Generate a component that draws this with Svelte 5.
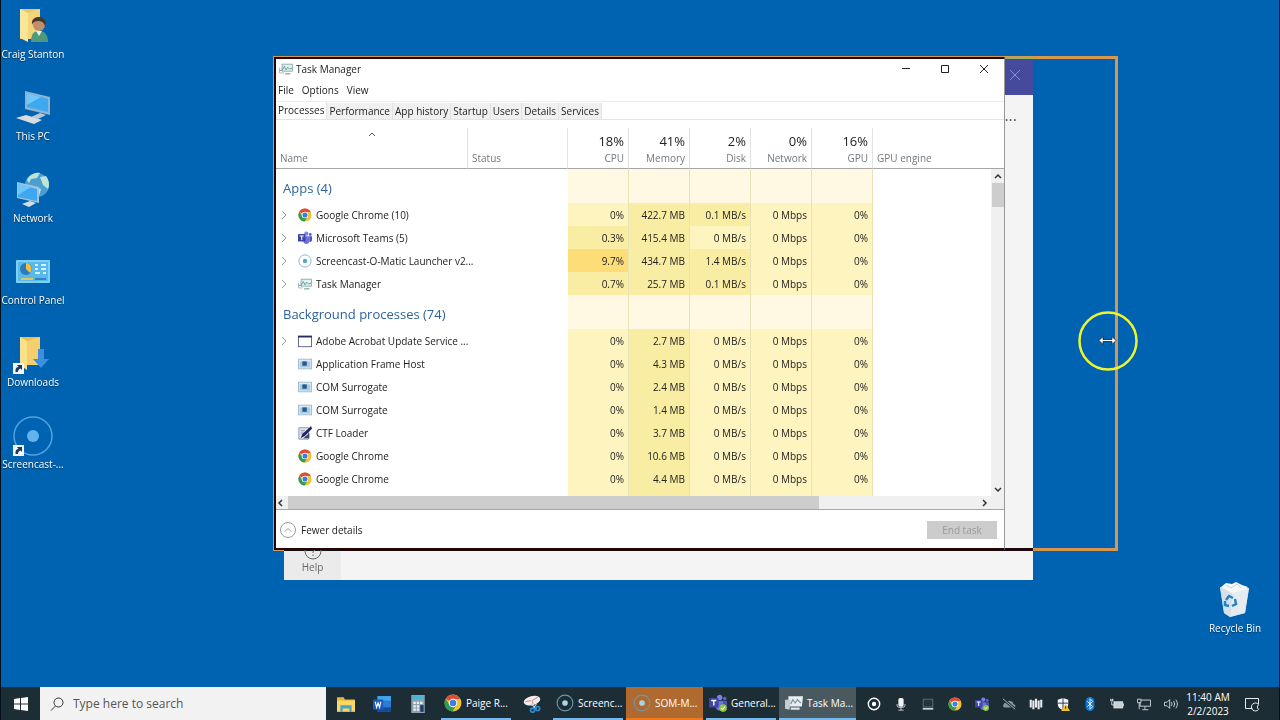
<script lang="ts">
  type Row = { name: string; icon: string; expand?: boolean; values: string[]; heat: number[] };

  const menus = ['File', 'Options', 'View'];
  const tabs = ['Processes', 'Performance', 'App history', 'Startup', 'Users', 'Details', 'Services'];
  const meters = [
    { total: '18%', label: 'CPU' },
    { total: '41%', label: 'Memory' },
    { total: '2%', label: 'Disk' },
    { total: '0%', label: 'Network' },
    { total: '16%', label: 'GPU' },
  ];

  const idle = (name: string, icon: string, memory: string, expand = false): Row => ({
    name,
    icon,
    expand,
    values: ['0%', memory, '0 MB/s', '0 Mbps', '0%'],
    heat: [1, 2, 1, 1, 1],
  });

  const groups: { title: string; rows: Row[] }[] = [
    {
      title: 'Apps (4)',
      rows: [
        { name: 'Google Chrome (10)', icon: 'chrome', expand: true, values: ['0%', '422.7 MB', '0.1 MB/s', '0 Mbps', '0%'], heat: [1, 2, 2, 1, 1] },
        { name: 'Microsoft Teams (5)', icon: 'teams', expand: true, values: ['0.3%', '415.4 MB', '0 MB/s', '0 Mbps', '0%'], heat: [2, 2, 1, 1, 1] },
        { name: 'Screencast-O-Matic Launcher v2...', icon: 'som', expand: true, values: ['9.7%', '434.7 MB', '1.4 MB/s', '0 Mbps', '0%'], heat: [3, 2, 2, 1, 1] },
        { name: 'Task Manager', icon: 'taskmgr', expand: true, values: ['0.7%', '25.7 MB', '0.1 MB/s', '0 Mbps', '0%'], heat: [2, 2, 2, 1, 1] },
      ],
    },
    {
      title: 'Background processes (74)',
      rows: [
        idle('Adobe Acrobat Update Service ...', 'window', '2.7 MB', true),
        idle('Application Frame Host', 'host', '4.3 MB'),
        idle('COM Surrogate', 'host', '2.4 MB'),
        idle('COM Surrogate', 'host', '1.4 MB'),
        idle('CTF Loader', 'ctf', '3.7 MB'),
        idle('Google Chrome', 'chrome', '10.6 MB'),
        idle('Google Chrome', 'chrome', '4.4 MB'),
      ],
    },
  ];

  const shortcuts = [
    { label: 'Craig Stanton', icon: 'user' },
    { label: 'This PC', icon: 'pc' },
    { label: 'Network', icon: 'network' },
    { label: 'Control Panel', icon: 'control' },
    { label: 'Downloads', icon: 'downloads' },
    { label: 'Screencast-...', icon: 'screencast' },
  ];

  const pinned = [
    { label: 'File Explorer', icon: 'explorer' },
    { label: 'Word', icon: 'word' },
    { label: 'Calculator', icon: 'calc' },
  ];

  const tray = ['record', 'mic', 'drive', 'chrome', 'teamsok', 'cloud', 'bars', 'shield', 'bluetooth', 'battery', 'ethernet', 'volume'];
</script>

{#snippet arrowBadge()}
  <rect x="0" y="29" width="11" height="11" fill="#f4f6f8" />
  <path d="M2.500 38q-.5-5 3-5l-1.500-2h5v5l-1.500-1.500q-2.500.5-2.500 3.500z" fill="#23395c" />
{/snippet}

{#snippet bigIcon(name: string)}
  <svg class="big" viewBox="0 0 40 40" aria-hidden="true">
    {#if name === 'user'}
      <path d="M7 3h20v30H7z" fill="#e9c766" />
      <path d="M7 3l8 4v29l-8-4z" fill="#fbe596" />
      <path d="M15 7l12-4v30H15z" fill="#f3d577" />
      <path d="M18 36c0-8 3-11 8-11s9 3 9 11z" fill="#4d9a7c" />
      <path d="M23 25l3 5 3-5z" fill="#e8efe8" />
      <circle cx="26" cy="19" r="6" fill="#c08f6a" />
      <path d="M19 19c-1-7 4-8 7-8s8 2 6 9c-1-4-4-5-7-5-3 0-5 1-6 4z" fill="#4a3528" />
    {:else if name === 'pc'}
      <path d="M12 3l25 6v18l-25-6z" fill="#8fb4cf" />
      <path d="M14 5l21 6v13l-21-5z" fill="#3fa9f0" />
      <path d="M14 5l14 4-14 8z" fill="#71c6fb" />
      <path d="M18 29l9-4 6 2-8 4z" fill="#b9c8d4" />
      <path d="M3 30l10-3 16 5-8 4z" fill="#d9dde2" />
    {:else if name === 'network'}
      <circle cx="24" cy="15" r="12" fill="#4a9fcf" />
      <path d="M14 10c3-6 9-8 13-7l-3 5-6 1-2 4zM27 7l6-1c3 4 4 9 2 13l-5-4zM22 17l6 2-2 7-4-3z" fill="#bfe3d6" />
      <path d="M4 12l22 5v16L4 28z" fill="#9fc4dc" />
      <path d="M5 14l19 5v12L5 27z" fill="#3ea7ee" />
      <path d="M5 14l13 3-13 8z" fill="#6fc5f9" />
      <path d="M9 34l8-3 6 2-7 4z" fill="#d7dde3" />
    {:else if name === 'control'}
      <rect x="3" y="8" width="34" height="23" rx="1" fill="#7fd0f5" />
      <rect x="5" y="10" width="30" height="19" fill="#59b9ea" />
      <circle cx="13" cy="17" r="6" fill="#2b7cbd" />
      <path d="M13 17V11a6 6 0 0 1 4 10z" fill="#f0c24c" />
      <path d="M22 13h3m3 0h5M22 17h3m3 0h5M22 21h5m3 0h3" stroke="#d8f1fc" stroke-width="2" />
      <path d="M8 27h12" stroke="#e2c65c" stroke-width="2" />
      <path d="M22 27h11" stroke="#2d86c3" stroke-width="2" />
    {:else if name === 'downloads'}
      <path d="M7 3h20v28H7z" fill="#e8bf56" />
      <path d="M7 3l7 4v29l-7-5z" fill="#fbe08a" />
      <path d="M14 7l13-4v28H14z" fill="#f4cf6c" />
      <path d="M25 15h6v10h5l-8 9-8-9h5z" fill="#3b8ee0" />
      {@render arrowBadge()}
    {:else if name === 'screencast'}
      <circle cx="20" cy="20" r="19" fill="none" stroke="#4fa3e3" stroke-width="1.500" />
      <circle cx="20" cy="20" r="6" fill="#63b3ee" />
      {@render arrowBadge()}
    {:else if name === 'bin'}
      <path d="M5 7l29 1-4 25-15 4-6-4z" fill="#b9cfe0" />
      <path d="M5 7l12 4-2 26-6-4z" fill="#d4e0ea" />
      <path d="M17 11l17-3-4 25-15 4z" fill="#e6ebf0" />
      <path d="M6 7l5-4 6 1 4-2 6 3 6 2-3 3-13 3z" fill="#f6f7f8" />
      <path d="M11 5l5 3 6-4 4 4" fill="none" stroke="#c9d3dc" />
      <path d="M11 20l3-4 4 2M20 19l1 5-4 2M14 26l-4-1v-4" fill="none" stroke="#2382cb" stroke-width="2.500" />
    {/if}
  </svg>
{/snippet}

{#snippet icon(name: string)}
  <svg class="icon" viewBox="0 0 16 16" aria-hidden="true">
    {#if name === 'chrome'}
      <circle cx="8" cy="8" r="7.500" fill="#f2c230" />
      <path d="M8 8L1.500 4.200A7.500 7.500 0 0 1 14.500 4.500H8z" fill="#df4b3c" />
      <path d="M1.500 4.200A7.500 7.500 0 0 0 7.500 15.500L11 9.700 8 8 4.800 9.500z" fill="#2f9c55" />
      <circle cx="8" cy="8" r="3.800" fill="#fff" />
      <circle cx="8" cy="8" r="2.900" fill="#3f7de0" />
    {:else if name === 'teams' || name === 'teamsok'}
      <circle cx="9.500" cy="3" r="2.400" fill="#7b83eb" />
      <circle cx="14" cy="4" r="1.600" fill="#5b63c4" />
      <path d="M6 6h7v5c0 5-7 5-7 0z" fill="#6a71d8" />
      <path d="M13 6h3v4c0 3-3 3-3 2z" fill="#4b53bc" />
      <rect x="0" y="3.500" width="8.500" height="8.500" rx="1" fill="#4046a8" />
      <path d="M2 5.800h4.500M4.250 5.800v4.500" stroke="#fff" stroke-width="1.200" />
      {#if name === 'teamsok'}
        <circle cx="12.500" cy="12.500" r="3.400" fill="#8dc63f" />
        <path d="M10.800 12.500l1.300 1.300 2.200-2.500" fill="none" stroke="#fff" />
      {/if}
    {:else if name === 'som'}
      <circle cx="8" cy="8" r="7" fill="none" stroke="#7fb2c6" />
      <circle cx="8" cy="8" r="2.500" fill="#5aa5c4" />
    {:else if name === 'somtask'}
      <circle cx="8" cy="8" r="7" fill="none" stroke="#6b98a8" />
      <circle cx="8" cy="8" r="2.500" fill="#a8d4e6" />
    {:else if name === 'taskmgr'}
      <path d="M3.500 2.500h12v8h-12z" fill="#e3f0f2" stroke="#8aa3a9" />
      <path d="M.5 6.500v6h5" fill="none" stroke="#9db2b7" />
      <path d="M1 10l3-1 2-4 2 4 2-3 2 2 3-1" fill="none" stroke="#4c9b94" />
      <path d="M7 13.500h6" stroke="#8fa5ab" stroke-width="1.500" />
    {:else if name === 'taskmgrlight'}
      <path d="M3 2h13l-1 9H3z" fill="#e9eff1" />
      <path d="M0 5h5l-1 9-4-1z" fill="#c3ced2" />
      <path d="M5 9l2-4 2 3 2-3 3 3" fill="none" stroke="#7f9198" />
      <path d="M5 13h8" stroke="#dfe6e9" stroke-width="2" />
    {:else if name === 'window'}
      <rect x=".5" y="2.500" width="15" height="12" fill="#fff" stroke="#54597f" />
      <path d="M0 3h16" stroke="#262c68" stroke-width="2" />
    {:else if name === 'host'}
      <rect x=".5" y="2.500" width="15" height="11" fill="#dcebf5" stroke="#9eb7c9" />
      <rect x="2" y="5" width="12" height="7" fill="#a9cbe2" />
      <rect x="5" y="5" width="5" height="5" fill="#1f5a90" />
    {:else if name === 'ctf'}
      <path d="M1 2h11v13H1z" fill="#e7eaf2" stroke="#7d88a5" />
      <path d="M3 5h5M3 7h4M3 9h3" stroke="#8792b0" />
      <path d="M15 0l1 3-8 8-5 3 2-5z" fill="#1e2560" />
      <path d="M6 14h7V8z" fill="#39437f" />
    {:else if name === 'explorer'}
      <path d="M0 2h6l1 2h9v11H0z" fill="#e8b83d" />
      <path d="M0 5h16v9H0z" fill="#fbd964" />
      <path d="M3 9h10v6h-2v-3H5v3H3z" fill="#4aa3c7" />
    {:else if name === 'word'}
      <path d="M4 1h12v14H4z" fill="#2b7cd3" />
      <path d="M4 1h12v4H4z" fill="#41a5ee" />
      <path d="M4 11h12v4H4z" fill="#134a9e" />
      <path d="M0 4h9v9H0z" fill="#185abd" />
      <path d="M2 6l1.200 5 1.300-4 1.300 4L7 6" fill="none" stroke="#fff" />
    {:else if name === 'calc'}
      <path d="M2 0h12v16H2z" fill="#8da2ae" />
      <path d="M3 1h10v3H3z" fill="#47b5d8" />
      <path d="M4 6h2v2H4zM7 6h2v2H7zM10 6h2v2h-2zM4 9h2v2H4zM7 9h2v2H7zM4 12h2v2H4zM7 12h2v2H7z" fill="#eef3f5" />
      <path d="M10 9h3v6h-3z" fill="#213a6c" />
    {:else if name === 'snip'}
      <ellipse cx="8" cy="5" rx="7.500" ry="4" transform="rotate(-15 8 5)" fill="#f3ecec" />
      <path d="M2 6l5-1M8 5l5-3M8 5l1 3" stroke="#d7968f" />
      <path d="M7 8l5 4M12 8l-3 4" stroke="#c8d3da" />
      <circle cx="8.500" cy="13.500" r="1.800" fill="none" stroke="#2b8ad0" stroke-width="1.500" />
      <circle cx="13" cy="12" r="1.800" fill="none" stroke="#2b8ad0" stroke-width="1.500" />
    {:else if name === 'record'}
      <circle cx="8" cy="8" r="6.500" fill="none" stroke="#fff" stroke-width="1.600" />
      <circle cx="8" cy="8" r="2.500" fill="#fff" />
    {:else if name === 'mic'}
      <rect x="5" y="1" width="6" height="10" rx="2" fill="#f2f4f5" />
      <path d="M3.500 8v2q0 2 4.500 2t4.500-2V8M8 12v3M5 15h6" fill="none" stroke="#d5dadd" />
    {:else if name === 'drive'}
      <rect x="2.500" y="2.500" width="11" height="9" fill="#26343c" stroke="#66747b" />
      <path d="M2 13.500h12" stroke="#c9d0d3" stroke-width="2" />
    {:else if name === 'cloud'}
      <path d="M3 12q-3-1-1-4 1-2 3-1 2-4 6-2 2 1 2 3 3 1 2 4z" fill="#8b969c" />
      <path d="M1 2l14 12" stroke="#1c2c35" stroke-width="3" />
      <path d="M1 2l14 12" stroke="#c2c9cd" />
    {:else if name === 'bars'}
      <path d="M2 3v9M5 4v10M8 2v10M11 4v10M14 3v9" stroke="#e6eaec" stroke-width="2.400" />
    {:else if name === 'shield'}
      <path d="M8 1l6 2v5q0 5-6 7-6-2-6-7V3z" fill="#f3f5f6" />
      <path d="M8 1v14M2 7h12" stroke="#1c2c35" />
      <path d="M11 8l5 8H6z" fill="#f3c22e" />
      <path d="M11 10.500v3" stroke="#333" />
    {:else if name === 'bluetooth'}
      <rect x="3" y="0" width="10" height="16" rx="5" fill="#1377d4" />
      <path d="M5 5l6 6-3 3V2l3 3-6 6" fill="none" stroke="#fff" />
    {:else if name === 'battery'}
      <rect x="4.500" y="5.500" width="10" height="7" fill="#c9d0d3" stroke="#e4e8ea" />
      <path d="M15.500 7.500v3M0 3.500h4M1 2v3M3 2v3M2 5v4h3" fill="none" stroke="#e4e8ea" />
    {:else if name === 'ethernet'}
      <path d="M3.500 3.500h12v7h-12zM9 11v3M6 14.500h7" fill="none" stroke="#d9dfe2" />
      <path d="M.5 2.500h4v4h-4zM2.500 7v7" fill="#1c2c35" stroke="#d9dfe2" />
    {:else if name === 'volume'}
      <path d="M.5 6v4h3l3 3V3l-3 3z" fill="none" stroke="#d9dfe2" />
      <path d="M8.500 6q1.500 2 0 4M11 4.500q2.500 3.500 0 7M13.500 3q3.500 5 0 10" fill="none" stroke="#d9dfe2" />
    {/if}
  </svg>
{/snippet}

{#snippet chevron(d: string)}
  <svg class="chevron" viewBox="0 0 10 10" aria-hidden="true"><path {d} /></svg>
{/snippet}

{#snippet task(label: string, name: string, state: string)}
  <button class="task {state}">{@render icon(name)}<span>{label}</span></button>
{/snippet}

<div class="screen">
  <main class="desktop">
    <nav class="shortcuts">
      {#each shortcuts as item}
        <button class="shortcut">{@render bigIcon(item.icon)}<span>{item.label}</span></button>
      {/each}
    </nav>
    <button class="shortcut bin">{@render bigIcon('bin')}<span>Recycle Bin</span></button>

    <section class="teams-window" aria-label="Microsoft Teams">
      <header>
        <button aria-label="Close Teams">
          <svg class="caption" viewBox="0 0 12 12"><path d="M1 1l10 10M11 1L1 11" /></svg>
        </button>
      </header>
      <div class="teams-more">···</div>
      <div class="teams-rail">
        <button>
          <svg viewBox="0 0 18 18" aria-hidden="true">
            <circle cx="9" cy="9" r="8" />
            <path d="M6.500 7q0-3 2.500-3t2.500 2.500Q11.500 8 9 9.500V11M9 12.500v1.500" />
          </svg>
          <span>Help</span>
        </button>
      </div>
    </section>

    <section class="window" aria-label="Task Manager">
      <header class="titlebar">
        {@render icon('taskmgr')}
        <h1>Task Manager</h1>
        <div class="captions">
          <button aria-label="Minimize"><svg class="caption" viewBox="0 0 12 12"><path d="M2 5.500h8" /></svg></button>
          <button aria-label="Maximize"><svg class="caption" viewBox="0 0 12 12"><path d="M2.500 2.500h7v7h-7z" /></svg></button>
          <button aria-label="Close"><svg class="caption" viewBox="0 0 12 12"><path d="M2 2l8 8M10 2l-8 8" /></svg></button>
        </div>
      </header>

      <nav class="menubar">
        {#each menus as menu}
          <button>{menu}</button>
        {/each}
      </nav>

      <div class="tabs" role="tablist">
        {#each tabs as tab, i}
          <button role="tab" aria-selected={i === 0} class:active={i === 0}>{tab}</button>
        {/each}
      </div>

      <div class="list">
        <table>
          <colgroup>
            <col class="c-name" />
            <col class="c-status" />
            {#each meters as _}<col class="c-meter" />{/each}
            <col />
          </colgroup>
          <thead>
            <tr>
              <th><span class="sort">{@render chevron('M2 7l3-3 3 3')}</span>Name</th>
              <th>Status</th>
              {#each meters as meter}
                <th class="meter"><strong>{meter.total}</strong>{meter.label}</th>
              {/each}
              <th class="last">GPU engine</th>
            </tr>
          </thead>
          {#each groups as group}
            <tbody>
              <tr class="group">
                <th colspan="2">{group.title}</th>
                {#each meters as _}<td class="heat0"></td>{/each}
                <td></td>
              </tr>
              {#each group.rows as row}
                <tr>
                  <td colspan="2">
                    <div class="process">
                      <span class="expander">{#if row.expand}{@render chevron('M3 1l4 4-4 4')}{/if}</span>
                      {@render icon(row.icon)}
                      <span>{row.name}</span>
                    </div>
                  </td>
                  {#each row.values as value, i}
                    <td class="value heat{row.heat[i]}">{value}</td>
                  {/each}
                  <td></td>
                </tr>
              {/each}
            </tbody>
          {/each}
          <tfoot>
            <tr>
              <td colspan="2"></td>
              {#each meters as _, i}<td class="heat{i === 1 ? 2 : 1}"></td>{/each}
              <td></td>
            </tr>
          </tfoot>
        </table>
        <div class="vscroll">
          <div class="track">
            {@render chevron('M2 7l3-3 3 3')}
            <div class="thumb"></div>
            {@render chevron('M2 3l3 3 3-3')}
          </div>
        </div>
      </div>

      <div class="hscroll">
        {@render chevron('M6 2L3 5l3 3')}
        <div class="rail"><div class="thumb"></div></div>
        {@render chevron('M4 2l3 3-3 3')}
      </div>

      <footer>
        <button class="fewer">
          <svg viewBox="0 0 16 16" aria-hidden="true"><circle cx="8" cy="8" r="7.500" /><path d="M5 9.500l3-3 3 3" /></svg>
          Fewer details
        </button>
        <button class="end" disabled>End task</button>
      </footer>
    </section>

    <div class="resize-outline"></div>
    <svg class="pointer" viewBox="0 0 60 60" aria-hidden="true">
      <circle cx="30" cy="30" r="28.500" fill="none" stroke="#eef52e" stroke-width="2.500" />
      <path d="M21 29.500l4-4v3h9v-3l4 4-4 4v-3h-9v3z" fill="#fff" stroke="#10253c" stroke-width=".8" />
    </svg>
  </main>

  <div class="taskbar">
    <button class="start" aria-label="Start">
      <svg viewBox="0 0 14 14"><path d="M0 2l6-1v5.500H0zM7 1l7-1v6.500H7zM0 7.500h6V13l-6-1zM7 7.500h7V14l-7-1z" /></svg>
    </button>
    <label class="search">
      <svg viewBox="0 0 14 14" aria-hidden="true"><circle cx="8.500" cy="5.500" r="4.500" /><path d="M5.500 9L1 13.500" /></svg>
      <input type="text" placeholder="Type here to search" aria-label="Type here to search" />
    </label>
    <div class="pinned">
      {#each pinned as app}
        <button aria-label={app.label}>{@render icon(app.icon)}</button>
      {/each}
    </div>
    <div class="tasks">
      {@render task('Paige R...', 'chrome', 'open')}
      <button class="snip" aria-label="Snipping Tool">{@render icon('snip')}</button>
      {@render task('Screenc...', 'somtask', 'open')}
      {@render task('SOM-M...', 'somtask', 'alert')}
      {@render task('General...', 'teamsok', 'open')}
      {@render task('Task Ma...', 'taskmgrlight', 'focused')}
    </div>
    <div class="tray">
      {#each tray as name}
        <span>{@render icon(name)}</span>
      {/each}
      <time>11:40 AM<br />2/2/2023</time>
      <button class="notes" aria-label="Notifications">
        <svg viewBox="0 0 16 16"><path d="M14.500 8V2.500h-13v10h7" /><path d="M14.500 8.500a4 4 0 1 0 0 5 3.500 3.500 0 0 1 0-5z" /></svg>
      </button>
    </div>
  </div>
</div>

<style>
  :global(body) {
    background: #0063b1;
  }

  .screen {
    display: flex;
    flex-direction: column;
    min-height: 100vh;
    box-sizing: border-box;
    border: solid #04101f;
    border-width: 0 1px;
    font: 10px/14px "Open Sans", "Noto Sans", sans-serif;
    color: #222;
  }

  button {
    font: inherit;
    color: inherit;
    background: none;
    border: none;
    padding: 0;
  }

  svg {
    display: block;
    flex: none;
  }

  .icon {
    width: 14px;
    height: 14px;
  }

  .chevron {
    width: 10px;
    height: 10px;
    fill: none;
    stroke: #555;
  }

  /* desktop */
  .desktop {
    position: relative;
    flex: 1;
    background: #0063b1;
    isolation: isolate;
    overflow: hidden;
  }

  .shortcuts {
    display: flex;
    flex-direction: column;
    gap: 26px;
    width: 64px;
    padding-top: 5px;
  }

  .shortcut {
    display: flex;
    flex-direction: column;
    align-items: center;
    width: 64px;
    color: #fff;
    white-space: nowrap;
    text-shadow: 0 1px 1px rgba(0, 0, 0, 0.5);
  }

  .big {
    width: 40px;
    height: 42px;
  }

  .bin {
    position: absolute;
    right: 12px;
    bottom: 52px;
  }

  /* Teams window behind */
  .teams-window {
    position: absolute;
    left: 283px;
    top: 58px;
    width: 749px;
    height: 522px;
    background: #f4f4f4;
    display: flex;
    flex-direction: column;
  }

  .teams-window header {
    display: flex;
    justify-content: flex-end;
    height: 37px;
    background: #464a9c;
  }

  .teams-window header button {
    width: 36px;
    padding-bottom: 4px;
    display: grid;
    place-items: center;
  }

  .teams-window .caption {
    stroke: #8b8fd0;
  }

  .teams-more {
    flex: 1;
    padding: 18px 16px 0 0;
    text-align: right;
    font-size: 16px;
    color: #555;
  }

  .teams-rail {
    width: 57px;
    padding-bottom: 6px;
    background: #ebebeb;
    color: #666;
  }

  .teams-rail button {
    display: flex;
    flex-direction: column;
    align-items: center;
    width: 100%;
  }

  .teams-rail svg {
    width: 18px;
    height: 18px;
    fill: none;
    stroke: #666;
  }

  /* Task Manager */
  .window {
    position: absolute;
    left: 273px;
    top: 57px;
    width: 731px;
    height: 493px;
    box-sizing: border-box;
    padding: 2px 0 2px 2px;
    background: #fff;
    border-right: 1px solid #999;
    display: flex;
    flex-direction: column;
  }

  .titlebar {
    display: flex;
    align-items: center;
    gap: 3px;
    height: 20px;
    padding: 0 1px 0 3px;
  }

  h1 {
    flex: 1;
    margin: 0;
    font-size: 10px;
    font-weight: 400;
  }

  .captions {
    display: flex;
  }

  .captions button {
    display: grid;
    place-items: center;
    width: 39px;
  }

  .caption {
    width: 12px;
    height: 12px;
    fill: none;
    stroke: #222;
  }

  .menubar {
    display: flex;
    gap: 8px;
    height: 22px;
    padding-left: 2px;
    border-bottom: 1px solid #ececec;
  }

  .tabs {
    display: flex;
    align-items: flex-end;
    height: 17px;
    border-bottom: 1px solid #e4e4e4;
  }

  .tabs button {
    height: 16px;
    padding: 0 2px;
    background: #f0f0f0;
    border-right: 1px solid #e2e2e2;
    white-space: nowrap;
  }

  .tabs button.active {
    height: 17px;
    padding-bottom: 2px;
    background: #fff;
  }

  .list {
    display: flex;
    flex: 1;
    min-height: 0;
    padding-top: 8px;
  }

  table {
    flex: 1;
    min-width: 0;
    table-layout: fixed;
    border-collapse: separate;
    border-spacing: 0;
  }

  th,
  td {
    padding: 0;
    font-weight: 400;
    text-align: left;
    white-space: nowrap;
  }

  .c-name { width: 192px; }
  .c-status { width: 100px; }
  .c-meter { width: 61px; }

  thead th {
    height: 41px;
    box-sizing: border-box;
    padding: 0 4px 3px;
    vertical-align: bottom;
    color: #72797f;
    border-right: 1px solid #e2e2e2;
    border-bottom: 1px solid #a6a6a6;
  }

  thead .last {
    border-right: none;
  }

  thead th.meter {
    text-align: right;
  }

  thead strong {
    display: block;
    font-size: 13px;
    line-height: 20px;
    font-weight: 400;
    color: #222;
  }

  .sort {
    display: flex;
    justify-content: center;
    padding-bottom: 12px;
  }

  tbody tr {
    height: 23px;
  }

  tbody .group {
    height: 34px;
  }

  .group th {
    padding: 4px 0 0 7px;
    font-size: 13px;
    color: #2d629c;
  }

  tfoot tr {
    height: 6px;
  }

  .process {
    display: flex;
    align-items: center;
    padding-left: 3px;
    gap: 4px;
  }

  .process .chevron {
    stroke: #999;
  }

  .expander {
    width: 15px;
  }

  .value {
    text-align: right;
    padding-right: 4px;
  }

  .heat0, .heat1, .heat2, .heat3 { border-right: 1px solid #e9e2b4; }
  .heat0 { background: #fff9e3; }
  .heat1 { background: #fef4bf; }
  .heat2 { background: #f9eca3; }
  .heat3 { background: #fddd78; }

  .vscroll {
    width: 13px;
    padding-top: 40px;
    display: flex;
  }

  .track {
    flex: 1;
    display: flex;
    flex-direction: column;
    align-items: center;
    padding: 2px 0 1px;
    background: #f0f0f0;
    border-top: 1px solid #a6a6a6;
  }

  .track .thumb {
    width: 12px;
    height: 24px;
    margin: 2px 0 auto;
    background: #cdcdcd;
  }

  .hscroll {
    display: flex;
    align-items: center;
    height: 13px;
    padding-right: 15px;
    background: #f0f0f0;
    border-bottom: 1px solid #a6a6a6;
  }

  .hscroll .chevron,
  .track .chevron {
    stroke: #333;
    stroke-width: 1.5px;
  }

  .rail {
    flex: 1;
    padding: 0 2px;
  }

  .rail .thumb {
    width: 77%;
    height: 13px;
    background: #cdcdcd;
  }

  footer {
    display: flex;
    align-items: center;
    justify-content: space-between;
    height: 36px;
    padding: 2px 7px 0 4px;
  }

  .fewer {
    display: flex;
    align-items: center;
    gap: 5px;
  }

  .fewer svg {
    width: 16px;
    height: 16px;
    fill: none;
    stroke: #999;
  }

  .end {
    width: 70px;
    height: 18px;
    background: #ccc;
    color: #999;
  }

  /* inverts whatever lies under it while the window is dragged wider */
  .resize-outline {
    position: absolute;
    left: 272px;
    top: 56px;
    width: 845px;
    height: 495px;
    box-sizing: border-box;
    border: 3px solid #d8faff;
    mix-blend-mode: difference;
  }

  .pointer {
    position: absolute;
    left: 1077px;
    top: 311px;
    width: 60px;
    height: 60px;
  }

  /* taskbar */
  .taskbar {
    display: flex;
    height: 33px;
    background: #1d2d36;
    color: #fff;
  }

  .start {
    width: 39px;
    display: grid;
    place-items: center;
  }

  .start svg {
    width: 14px;
    height: 14px;
    fill: #fff;
  }

  .search {
    display: flex;
    align-items: center;
    gap: 9px;
    width: 286px;
    box-sizing: border-box;
    padding-left: 10px;
    background: #f2f2f2;
  }

  .search svg {
    width: 14px;
    height: 14px;
    fill: none;
    stroke: #333;
  }

  .search input {
    flex: 1;
    min-width: 0;
    padding: 0;
    border: none;
    outline: none;
    background: none;
    font: 12px/16px "Open Sans", "Noto Sans", sans-serif;
  }

  .search input::placeholder {
    color: #555;
    opacity: 1;
  }

  .pinned {
    display: flex;
    padding-left: 2px;
  }

  .pinned button {
    display: grid;
    place-items: center;
    width: 36px;
  }

  .taskbar .icon {
    width: 18px;
    height: 18px;
  }

  .tasks {
    display: flex;
    gap: 3px;
    padding-left: 5px;
  }

  .task {
    display: flex;
    align-items: center;
    gap: 4px;
    width: 70px;
    box-sizing: border-box;
    padding-left: 3px;
    border-bottom: 2px solid #76b9ed;
    white-space: nowrap;
    overflow: hidden;
  }

  .snip {
    width: 36px;
    display: grid;
    place-items: center;
  }

  .task.alert {
    width: 77px;
    padding-left: 7px;
    background: #b06a30;
    border-color: #f07a1a;
  }

  .task.focused {
    width: 77px;
    padding-left: 6px;
    background: #4a5960;
  }

  .tray {
    display: flex;
    align-items: center;
    margin-left: auto;
    padding-right: 7px;
  }

  .tray span {
    display: grid;
    place-items: center;
    width: 27px;
  }

  .taskbar .tray .icon {
    width: 14px;
    height: 14px;
  }

  time {
    width: 48px;
    text-align: center;
    white-space: nowrap;
  }

  .notes {
    display: grid;
    place-items: center;
    width: 40px;
  }

  .notes svg {
    width: 16px;
    height: 16px;
    fill: none;
    stroke: #e8ecee;
  }
</style>
